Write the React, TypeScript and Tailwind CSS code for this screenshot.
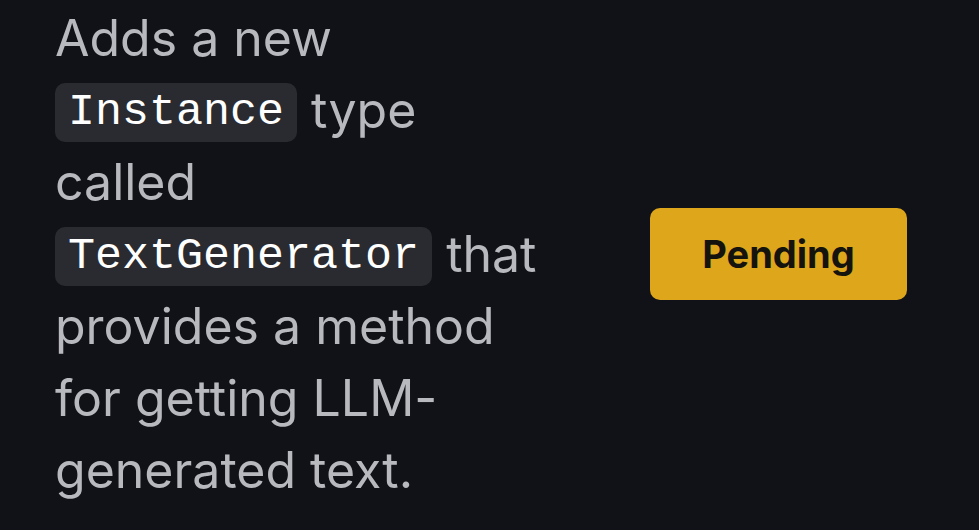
export default function App() {
  const code =
    "rounded-[10px] bg-[#2a2b30] px-[13px] py-[4px] align-[4px] text-[45px] leading-none text-white [font-family:'Liberation_Mono',monospace]";

  return (
    <div className="h-[530px] w-[979px] overflow-hidden bg-[#111217]">
      <div className="flex items-center pl-[55px] pt-[2px]">
        {/* description */}
        <div className="w-[500px] text-[50px] leading-[72px] text-[#b8b9be] [font-family:Inter,sans-serif]">
          Adds a new <span className={code}>Instance</span> type called{" "}
          <span className={code}>TextGenerator</span> that provides a method for getting LLM-generated text.
        </div>

        {/* status */}
        <div className="ml-[95px] flex h-[92px] w-[257px] items-center justify-center rounded-[10px] bg-[#dea61a] text-[38px] font-bold text-[#15130e] [font-family:Inter,sans-serif]">
          Pending
        </div>
      </div>
    </div>
  );
}
